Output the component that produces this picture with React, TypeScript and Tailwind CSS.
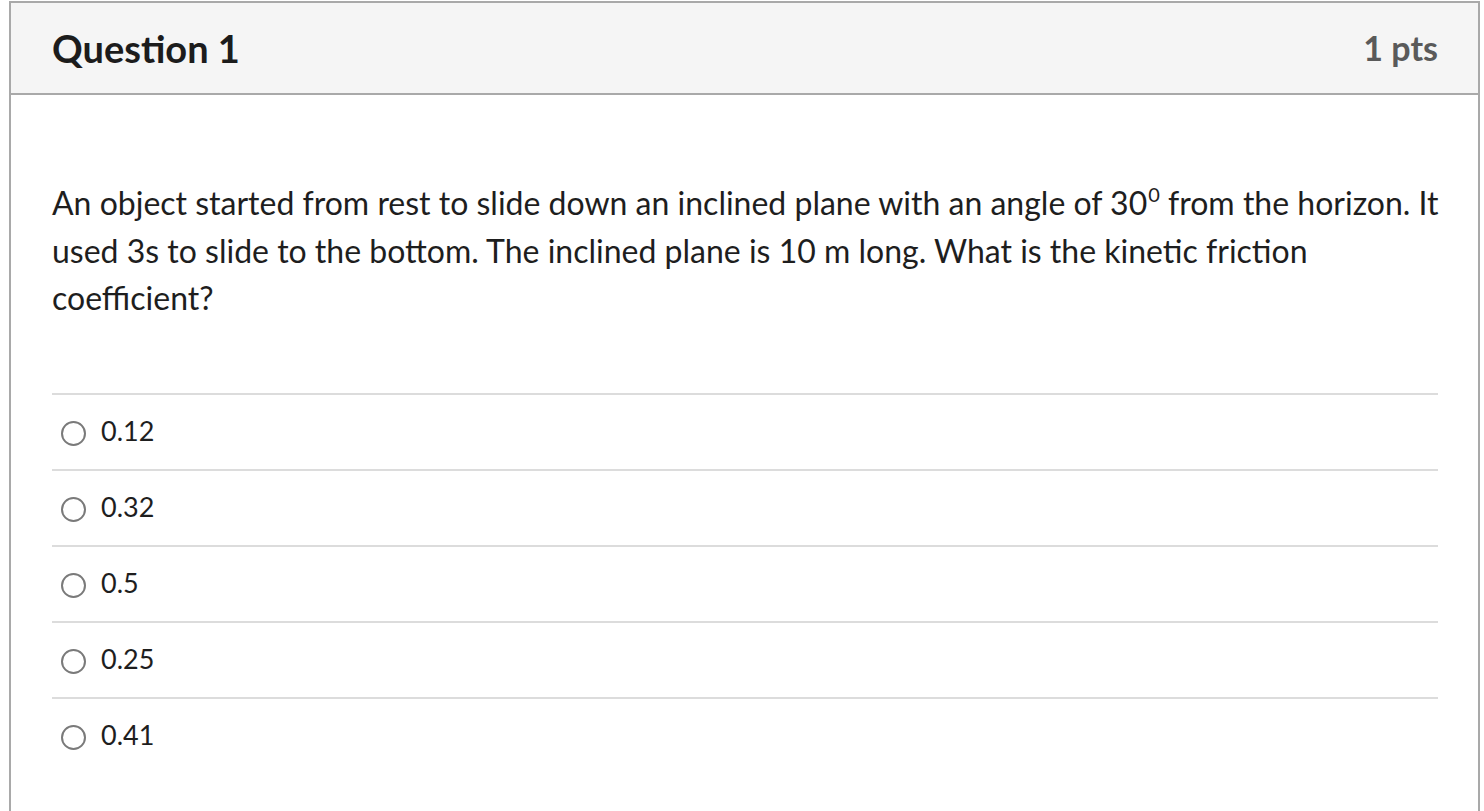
import React from "react";

const answers = ["0.12", "0.32", "0.5", "0.25", "0.41"];

export default function App() {
  return (
    <div className="min-h-[811px] bg-white pt-[1px] pl-[9px] pr-[4px]" style={{ fontFamily: "Lato, 'Noto Sans', sans-serif" }}>
      <div className="border-2 border-[#a9a9a9] border-b-0 w-[1471px]">
        <div className="h-[92px] bg-[#f5f5f5] border-b-2 border-[#a9a9a9] flex items-center justify-between pl-[41px] pr-[40px]">
          <h2 className="text-[38px] font-bold text-[#1c1c1c] leading-none">Question 1</h2>
          <div className="text-[34px] font-bold text-[#5a5a5a] leading-none">1 pts</div>
        </div>
        <div className="pl-[41px] pr-[37px] pt-[84px] pb-[40px]">
          <p className="text-[32px] leading-[47.6px] text-[#1e1e1e]">
            An object started from rest to slide down an inclined plane with an angle of 30<sup className="text-[20px] relative top-[-13px] ml-[1px]">0</sup> from the horizon. It used 3s to slide to the bottom. The inclined plane is 10 m long. What is the kinetic friction coefficient?
          </p>
          <div className="mt-[71px] mr-[3px]">
            {answers.map((a) => (
              <div key={a} className="h-[76px] border-t-2 border-[#dcdcdc] flex items-center pl-[9px]">
                <span className="w-[25px] h-[25px] rounded-full border-2 border-[#7a7a7a] bg-white mr-[15px] mt-[3px]"></span>
                <span className="text-[27px] text-[#1e1e1e] leading-none relative top-[-1px]">{a}</span>
              </div>
            ))}
          </div>
        </div>
      </div>
    </div>
  );
}
